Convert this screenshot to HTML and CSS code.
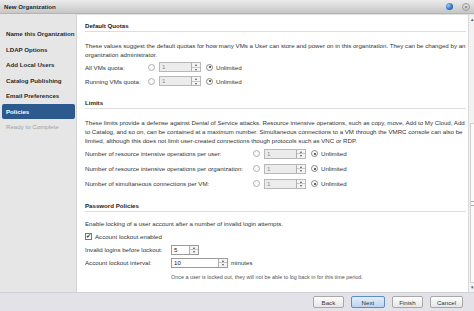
FILE: index.html
```html
<!DOCTYPE html>
<html lang="en">
<head>
    <meta charset="UTF-8">
    <title>New Organization</title>
    <link rel="stylesheet" href="styles.css">
</head>
<body>
    <div class="window">
        <div class="titlebar">
            <span class="title">New Organization</span>
            <span class="tb-icons">
                <span class="help"></span>
                <span class="close">×</span>
            </span>
        </div>

        <div class="main">
            <ul class="steps">
                <li>Name this Organization</li>
                <li>LDAP Options</li>
                <li>Add Local Users</li>
                <li>Catalog Publishing</li>
                <li>Email Preferences</li>
                <li class="active">Policies</li>
                <li class="todo">Ready to Complete</li>
            </ul>

            <div class="panel">
                <div class="content">
                    <div class="group">
                        <h2>Default Quotas</h2>
                        <p class="desc">These values suggest the default quotas for how many VMs a User can store and power on in this organization. They can be changed by an<br>organization administrator.</p>
                        <div class="row quota">
                            <span class="label">All VMs quota:</span>
                            <span class="radio"></span>
                            <span class="spin off"><span class="field">1</span><span class="arrows"><i class="up"></i><i class="down"></i></span></span>
                            <span class="radio on"></span>
                            <span class="opt">Unlimited</span>
                        </div>
                        <div class="row quota">
                            <span class="label">Running VMs quota:</span>
                            <span class="radio"></span>
                            <span class="spin off"><span class="field">1</span><span class="arrows"><i class="up"></i><i class="down"></i></span></span>
                            <span class="radio on"></span>
                            <span class="opt">Unlimited</span>
                        </div>
                    </div>

                    <div class="group">
                        <h2>Limits</h2>
                        <p class="desc">These limits provide a defense against Denial of Service attacks. Resource intensive operations, such as copy, move, Add to My Cloud, Add<br>to Catalog, and so on, can be contained at a maximum number. Simultaneous connections to a VM through the VMRC console can also be<br>limited, although this does not limit user-created connections though protocols such as VNC or RDP.</p>
                        <div class="row limit">
                            <span class="label">Number of resource intensive operations per user:</span>
                            <span class="radio"></span>
                            <span class="spin off"><span class="field">1</span><span class="arrows"><i class="up"></i><i class="down"></i></span></span>
                            <span class="radio on"></span>
                            <span class="opt">Unlimited</span>
                        </div>
                        <div class="row limit">
                            <span class="label">Number of resource intensive operations per organization:</span>
                            <span class="radio"></span>
                            <span class="spin off"><span class="field">1</span><span class="arrows"><i class="up"></i><i class="down"></i></span></span>
                            <span class="radio on"></span>
                            <span class="opt">Unlimited</span>
                        </div>
                        <div class="row limit">
                            <span class="label">Number of simultaneous connections per VM:</span>
                            <span class="radio"></span>
                            <span class="spin off"><span class="field">1</span><span class="arrows"><i class="up"></i><i class="down"></i></span></span>
                            <span class="radio on"></span>
                            <span class="opt">Unlimited</span>
                        </div>
                    </div>

                    <div class="group">
                        <h2>Password Policies</h2>
                        <p class="desc tight">Enable locking of a user account after a number of invalid login attempts.</p>
                        <div class="check-row">
                            <span class="checkbox">✔</span>
                            <span>Account lockout enabled</span>
                        </div>
                        <div class="row pw">
                            <span class="label">Invalid logins before lockout:</span>
                            <span class="spin short"><span class="field">5</span><span class="arrows"><i class="up"></i><i class="down"></i></span></span>
                        </div>
                        <div class="row pw">
                            <span class="label">Account lockout interval:</span>
                            <span class="spin long"><span class="field">10</span><span class="arrows"><i class="up"></i><i class="down"></i></span></span>
                            <span class="opt">minutes</span>
                        </div>
                        <p class="note">Once a user is locked out, they will not be able to log back in for this time period.</p>
                    </div>
                </div>

                <div class="scrollbar">
                    <span class="sb-arrow">▴</span>
                    <div class="track"><div class="thumb"><span class="grip"></span></div></div>
                    <span class="sb-arrow">▾</span>
                </div>
            </div>
        </div>

        <div class="footer">
            <button>Back</button>
            <button class="primary">Next</button>
            <button>Finish</button>
            <button>Cancel</button>
        </div>
    </div>
</body>
</html>
```

FILE: styles.css
```css
html, body {
    margin: 0;
    padding: 0;
}
body {
    font-family: "Liberation Sans", Arial, sans-serif;
    font-size: 6.15px;
    color: #333;
    background: #e4e4ea;
}
.window {
    width: 474px;
    height: 311px;
    display: flex;
    flex-direction: column;
    overflow: hidden;
}

/* title bar */
.titlebar {
    height: 14px;
    flex: none;
    display: flex;
    align-items: center;
    justify-content: space-between;
    padding: 0 4px;
    background: linear-gradient(#ececec, #c6c6c6);
    border-bottom: 1px solid #b4b4b4;
    box-sizing: border-box;
}
.title {
    font-weight: bold;
    color: #2a2a2a;
}
.tb-icons {
    display: flex;
    align-items: center;
    gap: 9px;
}
.help {
    width: 7px;
    height: 7px;
    border-radius: 50%;
    background: radial-gradient(circle at 35% 35%, #9cc8f2, #2a6fc0 60%, #1d4f94);
}
.close {
    width: 6px;
    height: 6px;
    border-radius: 50%;
    border: 1px solid #9a9a9a;
    font-size: 6px;
    line-height: 6px;
    text-align: center;
    color: #666;
}

/* body */
.main {
    flex: 1;
    display: flex;
    min-height: 0;
}
.steps {
    width: 76px;
    flex: none;
    margin: 0;
    padding: 12px 1px 0 2px;
    box-sizing: border-box;
    list-style: none;
    background: #e6e6e6;
}
.steps li {
    height: 15.5px;
    line-height: 15.5px;
    padding-left: 4px;
    font-weight: bold;
    color: #2b2b2b;
    white-space: nowrap;
    border-radius: 2px;
}
.steps li.active {
    background: #2c5a8e;
    color: #fff;
}
.steps li.todo {
    font-weight: normal;
    color: #a2a2a2;
}

.panel {
    flex: 1;
    display: flex;
    background: #fff;
    border-top: 1px solid #e0e0e0;
    border-left: 1px solid #d4d4d4;
}
.content {
    flex: 1;
    padding: 7px 2px 0 8px;
    overflow: hidden;
}
.group {
    margin-bottom: 11px;
}
.group h2 {
    margin: 0;
    font-size: 6.15px;
    line-height: 8px;
    padding-bottom: 1px;
    color: #222;
    border-bottom: 1px solid #dedede;
}
.desc {
    margin: 9px 0 1px;
    line-height: 9px;
    white-space: nowrap;
}
.desc.tight {
    margin-top: 7px;
}
.row {
    display: flex;
    align-items: center;
    height: 14px;
}
.row .label {
    flex: none;
    white-space: nowrap;
}
.quota .label {
    width: 63px;
}
.limit {
    height: 15px;
}
.limit .label {
    width: 168px;
}
.pw {
    height: 13px;
}
.pw .label {
    width: 86px;
}
.opt {
    margin-left: 3px;
}

/* radio buttons */
.radio {
    width: 5px;
    height: 5px;
    flex: none;
    border: 1px solid #b0b0b0;
    border-radius: 50%;
    background: #fafafa;
    position: relative;
    margin-right: 4px;
}
.radio.on {
    margin-left: 5px;
    margin-right: 0;
    border-color: #8a8a8a;
}
.radio.on::after {
    content: "";
    position: absolute;
    left: 1.5px;
    top: 1.5px;
    width: 2px;
    height: 2px;
    border-radius: 50%;
    background: #333;
}

/* spinners */
.spin {
    display: flex;
    height: 10px;
    width: 42px;
    box-sizing: border-box;
    border: 1px solid #9c9c9c;
    background: #fff;
    flex: none;
}
.spin .field {
    flex: 1;
    padding-left: 2px;
    line-height: 8px;
    color: #222;
}
.spin .arrows {
    width: 8px;
    display: flex;
    flex-direction: column;
    border-left: 1px solid #b0b0b0;
    background: #f4f4f4;
}
.spin .arrows i {
    flex: 1;
    position: relative;
}
.spin .arrows i.up {
    border-bottom: 1px solid #c8c8c8;
}
.spin .arrows i::after {
    content: "";
    position: absolute;
    left: 2.5px;
    top: 1px;
    border-left: 1.5px solid transparent;
    border-right: 1.5px solid transparent;
}
.spin .arrows i.up::after {
    border-bottom: 2px solid #555;
}
.spin .arrows i.down::after {
    border-top: 2px solid #555;
}
.spin.off {
    background: #ececec;
    border-color: #b8b8b8;
}
.spin.off .field {
    color: #8a8a8a;
}
.spin.short {
    width: 28px;
}
.spin.long {
    width: 57px;
}

.check-row {
    display: flex;
    align-items: center;
    height: 14px;
}
.checkbox {
    width: 5px;
    height: 5px;
    border: 1px solid #777;
    margin-right: 3px;
    font-size: 6px;
    line-height: 5px;
    color: #222;
    overflow: visible;
}
.note {
    margin: 4px 0 0 86px;
    font-size: 5.4px;
    color: #555;
    line-height: 8px;
}

/* scrollbar */
.scrollbar {
    width: 8px;
    flex: none;
    display: flex;
    flex-direction: column;
    background: #f2f2f2;
    border-left: 1px solid #d8d8d8;
}
.sb-arrow {
    height: 9px;
    font-size: 5px;
    line-height: 9px;
    text-align: center;
    color: #555;
}
.track {
    flex: 1;
    display: flex;
    flex-direction: column;
    justify-content: flex-end;
}
.thumb {
    height: 158px;
    margin: 0 1px;
    background: #fbfbfb;
    border: 1px solid #cfcfcf;
    display: flex;
    align-items: center;
    justify-content: center;
}
.grip {
    width: 4px;
    height: 3px;
    border-top: 1px solid #aaa;
    border-bottom: 1px solid #aaa;
}

/* footer */
.footer {
    height: 19px;
    flex: none;
    display: flex;
    align-items: center;
    justify-content: flex-end;
    gap: 7px;
    padding-right: 11px;
    background: #e2e2e8;
    border-top: 1px solid #d0d0d6;
    box-sizing: border-box;
}
.footer button {
    height: 12px;
    min-width: 31px;
    padding: 0 6px;
    font-family: "Liberation Sans", Arial, sans-serif;
    font-size: 6.15px;
    color: #333;
    border: 1px solid #a8a8a8;
    border-radius: 2px;
    background: linear-gradient(#fdfdfd, #e6e6e6);
}
.footer button.primary {
    min-width: 34px;
    border-color: #5d8ccb;
    background: linear-gradient(#e4eefb, #bcd3f1);
}
```
